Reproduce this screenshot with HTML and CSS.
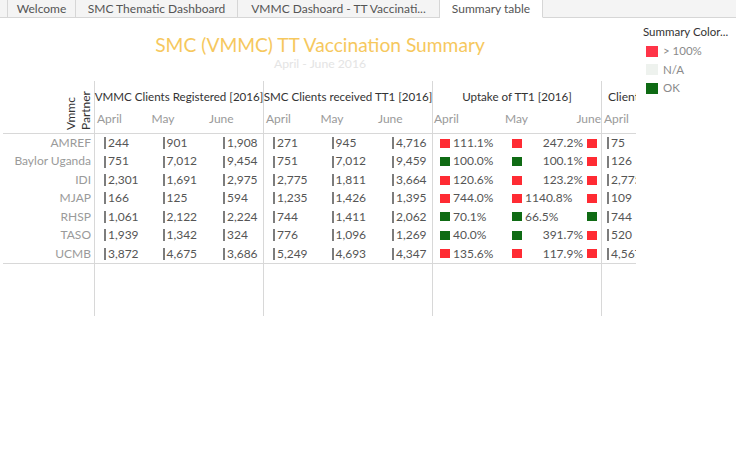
FILE: index.html
```html
<!DOCTYPE html>
<html>
<head>
<meta charset="utf-8">
<link rel="stylesheet" href="styles.css">
</head>
<body>
<div class="tabs">
  <div class="tab-lead"></div>
  <div class="tab tw1">Welcome</div>
  <div class="tab tw2">SMC Thematic Dashboard</div>
  <div class="tab tw3">VMMC Dashoard - TT Vaccinati...</div>
  <div class="tab tw4 active">Summary table</div>
  <div class="tab-fill"></div>
</div>
<div class="page">
  <div class="dash">
    <div class="titles">
      <div class="title">SMC (VMMC) TT Vaccination Summary</div>
      <div class="subtitle">April - June 2016</div>
    </div>
    <div class="table">
      <div class="col rowhdr">
        <div class="hdr-both">
          <div class="vlabel">Vmmc<br>Partner</div>
        </div>
        <div class="body">
          <div class="rl">AMREF</div>
          <div class="rl">Baylor Uganda</div>
          <div class="rl">IDI</div>
          <div class="rl">MJAP</div>
          <div class="rl">RHSP</div>
          <div class="rl">TASO</div>
          <div class="rl">UCMB</div>
        </div>
        <div class="filler"></div>
      </div>

      <div class="col pane">
        <div class="h1">VMMC Clients Registered [2016]</div>
        <div class="h2"><span class="m1">April</span><span class="m2">May</span><span class="m3">June</span></div>
        <div class="body">
          <div class="nr"><span class="c c1"><i></i>244</span><span class="c c2"><i></i>901</span><span class="c c3"><i></i>1,908</span></div>
          <div class="nr"><span class="c c1"><i></i>751</span><span class="c c2"><i></i>7,012</span><span class="c c3"><i></i>9,454</span></div>
          <div class="nr"><span class="c c1"><i></i>2,301</span><span class="c c2"><i></i>1,691</span><span class="c c3"><i></i>2,975</span></div>
          <div class="nr"><span class="c c1"><i></i>166</span><span class="c c2"><i></i>125</span><span class="c c3"><i></i>594</span></div>
          <div class="nr"><span class="c c1"><i></i>1,061</span><span class="c c2"><i></i>2,122</span><span class="c c3"><i></i>2,224</span></div>
          <div class="nr"><span class="c c1"><i></i>1,939</span><span class="c c2"><i></i>1,342</span><span class="c c3"><i></i>324</span></div>
          <div class="nr"><span class="c c1"><i></i>3,872</span><span class="c c2"><i></i>4,675</span><span class="c c3"><i></i>3,686</span></div>
        </div>
        <div class="filler"></div>
      </div>

      <div class="col pane">
        <div class="h1">SMC Clients received TT1 [2016]</div>
        <div class="h2"><span class="m1">April</span><span class="m2">May</span><span class="m3">June</span></div>
        <div class="body">
          <div class="nr"><span class="c c1"><i></i>271</span><span class="c c2"><i></i>945</span><span class="c c3"><i></i>4,716</span></div>
          <div class="nr"><span class="c c1"><i></i>751</span><span class="c c2"><i></i>7,012</span><span class="c c3"><i></i>9,459</span></div>
          <div class="nr"><span class="c c1"><i></i>2,775</span><span class="c c2"><i></i>1,811</span><span class="c c3"><i></i>3,664</span></div>
          <div class="nr"><span class="c c1"><i></i>1,235</span><span class="c c2"><i></i>1,426</span><span class="c c3"><i></i>1,395</span></div>
          <div class="nr"><span class="c c1"><i></i>744</span><span class="c c2"><i></i>1,411</span><span class="c c3"><i></i>2,062</span></div>
          <div class="nr"><span class="c c1"><i></i>776</span><span class="c c2"><i></i>1,096</span><span class="c c3"><i></i>1,269</span></div>
          <div class="nr"><span class="c c1"><i></i>5,249</span><span class="c c2"><i></i>4,693</span><span class="c c3"><i></i>4,347</span></div>
        </div>
        <div class="filler"></div>
      </div>

      <div class="col pane">
        <div class="h1">Uptake of TT1 [2016]</div>
        <div class="h2 h2u"><span class="u1">April</span><span class="u2">May</span><span class="u3">June</span></div>
        <div class="body">
          <div class="ur"><b class="sq red"></b><span class="ut1">111.1%</span><b class="sq red"></b><span class="ut2">247.2%</span><b class="sq red"></b></div>
          <div class="ur"><b class="sq green"></b><span class="ut1">100.0%</span><b class="sq green"></b><span class="ut2">100.1%</span><b class="sq red"></b></div>
          <div class="ur"><b class="sq red"></b><span class="ut1">120.6%</span><b class="sq red"></b><span class="ut2">123.2%</span><b class="sq red"></b></div>
          <div class="ur"><b class="sq red"></b><span class="ut1">744.0%</span><b class="sq red"></b><span class="ut2 tl">1140.8%</span><b class="sq red"></b></div>
          <div class="ur"><b class="sq green"></b><span class="ut1">70.1%</span><b class="sq green"></b><span class="ut2 tl">66.5%</span><b class="sq green"></b></div>
          <div class="ur"><b class="sq green"></b><span class="ut1">40.0%</span><b class="sq green"></b><span class="ut2">391.7%</span><b class="sq red"></b></div>
          <div class="ur"><b class="sq red"></b><span class="ut1">135.6%</span><b class="sq red"></b><span class="ut2">117.9%</span><b class="sq red"></b></div>
        </div>
        <div class="filler"></div>
      </div>

      <div class="col pane last">
        <div class="h1 h1l">Clients received TT2 [2016]</div>
        <div class="h2"><span class="l1">April</span></div>
        <div class="body">
          <div class="nr"><span class="c c4"><i></i>75</span></div>
          <div class="nr"><span class="c c4"><i></i>126</span></div>
          <div class="nr"><span class="c c4"><i></i>2,775</span></div>
          <div class="nr"><span class="c c4"><i></i>109</span></div>
          <div class="nr"><span class="c c4"><i></i>744</span></div>
          <div class="nr"><span class="c c4"><i></i>520</span></div>
          <div class="nr"><span class="c c4"><i></i>4,567</span></div>
        </div>
        <div class="filler"></div>
      </div>
    </div>
  </div>

  <div class="legend">
    <div class="lg-title">Summary Color...</div>
    <div class="lg-items">
      <div class="lg-item"><b class="lsq lred"></b><span>&gt; 100%</span></div>
      <div class="lg-item"><b class="lsq lna"></b><span>N/A</span></div>
      <div class="lg-item"><b class="lsq lgreen"></b><span>OK</span></div>
    </div>
  </div>
</div>
</body>
</html>
```

FILE: styles.css
```css
* { box-sizing: border-box; }
html, body {
  margin: 0;
  padding: 0;
  background: #ffffff;
  font-family: Lato, "Open Sans", sans-serif;
  width: 736px;
  height: 454px;
  overflow: hidden;
}

/* Tabs */
.tabs {
  display: flex;
  height: 18px;
  background: #f4f4f4;
}
.tab-lead, .tab, .tab-fill {
  height: 18px;
  border-bottom: 1px solid #d6d6d6;
  flex: none;
}
.tab-lead {
  width: 8px;
  border-right: 1px solid #d6d6d6;
}
.tab {
  border-right: 1px solid #d6d6d6;
  font-size: 12px;
  line-height: 17px;
  color: #555;
  text-align: center;
  white-space: nowrap;
}
.tw1 { width: 68px; }
.tw2 { width: 162px; }
.tw3 { width: 202px; }
.tw4 { width: 103px; }
.tab.active {
  background: #ffffff;
  border-bottom-color: #ffffff;
}
.tab-fill { flex: 1; }

/* Page */
.page {
  display: flex;
}
.dash {
  width: 640px;
  flex: none;
}
.titles {
  height: 63px;
  padding-top: 16px;
  text-align: center;
}
.title {
  font-size: 19.2px;
  line-height: 22px;
  color: #f6c85e;
  white-space: nowrap;
}
.subtitle {
  margin-top: 1px;
  font-size: 12.2px;
  line-height: 14px;
  color: #e4e4e4;
}

/* Table */
.table {
  display: flex;
  margin-left: 3px;
  width: 633px;
  overflow: hidden;
}
.col {
  display: flex;
  flex-direction: column;
  flex: none;
}
.rowhdr { width: 91px; }
.pane {
  width: 169px;
  border-left: 1px solid #d8d8d8;
}
.pane.last { width: 35px; overflow: hidden; }

.hdr-both {
  height: 52px;
  display: flex;
  justify-content: flex-end;
  align-items: flex-end;
  padding-right: 1px;
  padding-bottom: 3px;
}
.vlabel {
  writing-mode: vertical-rl;
  transform: rotate(180deg);
  font-size: 12px;
  line-height: 15px;
  color: #333;
  white-space: nowrap;
}

.h1 {
  height: 27px;
  font-size: 11.6px;
  line-height: 32px;
  color: #333;
  white-space: nowrap;
  display: flex;
  justify-content: center;
}
.h1l { justify-content: flex-start; padding-left: 6px; font-size: 12px; }
.h2 {
  height: 25px;
  display: grid;
  grid-template-columns: 56.5px 56.5px 56px;
  font-size: 12px;
  line-height: 22px;
  color: #9a9a9a;
  white-space: nowrap;
}
.m1 { padding-left: 2px; }
.m2 { padding-left: 0; }
.m3 { padding-left: 1px; }
.l1 { padding-left: 2px; }
.h2u { display: flex; }
.u1 { width: 72px; padding-left: 1px; flex: none; }
.u2 { width: 68px; flex: none; }
.u3 { flex: 1; text-align: right; }

.body {
  border-top: 1px solid #d8d8d8;
  border-bottom: 1px solid #d8d8d8;
  height: 131px;
}
.filler { height: 52px; }

.rl {
  height: 18.43px;
  line-height: 18.43px;
  font-size: 12px;
  color: #9a9a9a;
  text-align: right;
  padding-right: 3px;
  white-space: nowrap;
}

.nr {
  height: 18.43px;
  display: grid;
  grid-template-columns: 56.5px 56.5px 56px;
  font-size: 12px;
  line-height: 18.43px;
  color: #555;
  white-space: nowrap;
}
.c {
  display: flex;
  align-items: center;
}
.c i {
  display: block;
  width: 2px;
  height: 12px;
  background: #7d7d7d;
  margin-right: 2px;
}
.c1 { padding-left: 9px; }
.c2 { padding-left: 11px; }
.c3 { padding-left: 15px; }
.c4 { padding-left: 5px; }

.ur {
  height: 18.43px;
  display: flex;
  align-items: center;
  padding-left: 7px;
  font-size: 12px;
  line-height: 18.43px;
  color: #555;
  white-space: nowrap;
}
.sq {
  display: block;
  width: 10px;
  height: 9px;
  flex: none;
}
.red { background: #ff2b33; }
.green { background: #0f6b14; }
.ut1 {
  width: 62px;
  flex: none;
  padding-left: 3px;
}
.ut2 {
  width: 62px;
  flex: none;
  padding-right: 1px;
  text-align: right;
  margin-right: 3px;
}
.ut2.tl {
  text-align: left;
  padding-left: 3px;
  padding-right: 0;
}

/* Legend */
.legend {
  padding-left: 3px;
  padding-top: 7px;
  flex: 1;
}
.lg-title {
  font-size: 11.5px;
  line-height: 14px;
  color: #333;
  white-space: nowrap;
}
.lg-items {
  padding-top: 3px;
}
.lg-item {
  display: flex;
  align-items: center;
  height: 18.5px;
  font-size: 11.5px;
  line-height: 14px;
  color: #8a8a8a;
  white-space: nowrap;
}
.lsq {
  display: block;
  width: 12px;
  height: 11px;
  margin-left: 3px;
  margin-right: 5px;
  flex: none;
}
.lred { background: #ff3448; }
.lna { background: #eef2ee; }
.lgreen { background: #0e6a13; }
```
